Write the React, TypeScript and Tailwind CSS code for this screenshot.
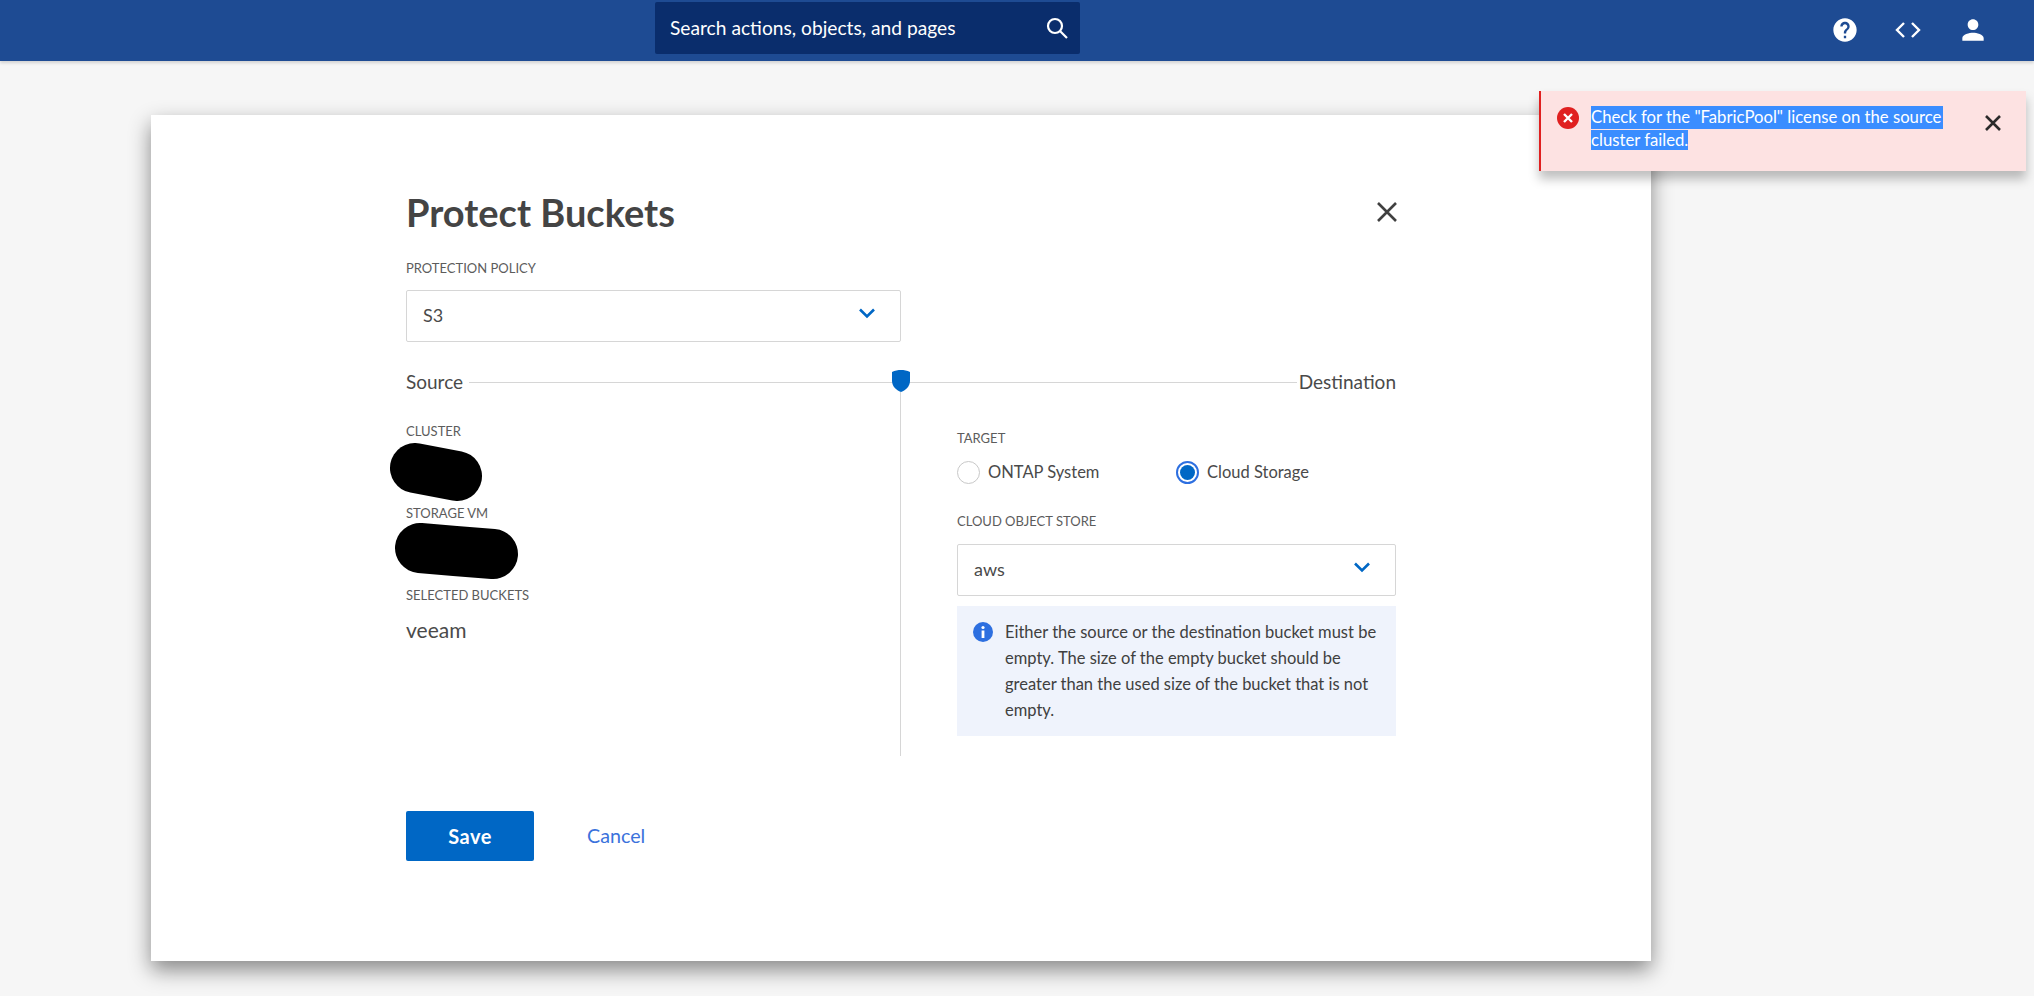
const font = "[font-family:Lato,'Noto_Sans',sans-serif]";

function Label({ children, className = '' }: { children: React.ReactNode; className?: string }) {
  return <div className={`h-[18px] text-[13px] leading-[18px] text-[#5c5c5c] ${className}`}>{children}</div>;
}

function Chevron() {
  return (
    <svg width="20" height="12" viewBox="0 0 20 12" fill="none" stroke="#0067c5" strokeWidth="2.6">
      <path d="M3 2.5l7 7 7-7" />
    </svg>
  );
}

function Select({ value, className = '' }: { value: string; className?: string }) {
  return (
    <div className={`flex h-[52px] items-center justify-between rounded-[2px] border border-[#d6d6d6] bg-white pl-4 pr-[23px] text-[18px] text-[#4a4a4a] ${className}`}>
      <span className="-mt-[2px]">{value}</span>
      <span className="-mt-[6px]"><Chevron /></span>
    </div>
  );
}

function Radio({ checked, label }: { checked?: boolean; label: string }) {
  return (
    <div className="flex items-center gap-[8px] text-[16.5px] text-[#4a4a4a]">
      {checked ? (
        <span className="flex h-[23px] w-[23px] items-center justify-center rounded-full border-2 border-[#2d6fe0] bg-white">
          <span className="h-[15px] w-[15px] rounded-full bg-[#0067c5]" />
        </span>
      ) : (
        <span className="h-[23px] w-[23px] rounded-full border border-[#c8c8c8] bg-white" />
      )}
      <span>{label}</span>
    </div>
  );
}

export default function App() {
  return (
    <div className={`relative h-[996px] overflow-hidden bg-[#f6f6f6] ${font}`}>
      <header className="relative flex h-[61px] items-start bg-[#1e4b93] shadow-[0_2px_3px_rgba(0,0,0,0.15)]">
        <div className="ml-[655px] mt-[2px] flex h-[52px] w-[425px] items-center justify-between rounded-[2px] bg-[#0a2d6c] pl-[15px] pr-[10px] text-[19.2px] text-white">
          <span>Search actions, objects, and pages</span>
          <svg width="26" height="26" viewBox="0 0 26 26" fill="none" stroke="white" strokeWidth="2.2">
            <circle cx="11" cy="11" r="7" />
            <path d="M16 16l7 7" />
          </svg>
        </div>
        <div className="ml-auto mr-[45px] mt-[14px] flex items-center gap-[35px]">
          <svg width="28" height="28" viewBox="0 0 24 24" fill="white">
            <path d="M12 2C6.48 2 2 6.48 2 12s4.48 10 10 10 10-4.48 10-10S17.52 2 12 2zm1 17h-2v-2h2v2zm2.07-7.75l-.9.92C13.45 12.9 13 13.5 13 15h-2v-.5c0-1.1.45-2.1 1.17-2.83l1.24-1.26c.37-.36.59-.86.59-1.41 0-1.1-.9-2-2-2s-2 .9-2 2H8c0-2.21 1.79-4 4-4s4 1.79 4 4c0 .88-.36 1.68-.93 2.25z" />
          </svg>
          <svg width="28" height="28" viewBox="0 0 28 28" fill="none" stroke="white" strokeWidth="2.4">
            <path d="M10 7l-7 7 7 7M18 7l7 7-7 7" />
          </svg>
          <svg width="32" height="32" viewBox="0 0 24 24" fill="white">
            <path d="M12 12c2.21 0 4-1.79 4-4s-1.79-4-4-4-4 1.79-4 4 1.79 4 4 4zm0 2c-2.67 0-8 1.34-8 4v2h16v-2c0-2.66-5.33-4-8-4z" />
          </svg>
        </div>
      </header>

      <main className="ml-[151px] mt-[54px] flex h-[846px] w-[1500px] flex-col bg-white pl-[255px] pr-[255px] pt-[70px] shadow-[0_9px_20px_rgba(0,0,0,0.45)]">
        <div className="flex h-[54px] items-center justify-between">
          <h1 className="text-[38px] font-bold text-[#444444]">Protect Buckets</h1>
          <svg className="mr-[-3px]" width="24" height="24" viewBox="0 0 24 24" fill="none" stroke="#404040" strokeWidth="2.6">
            <path d="M3 3l18 18M21 3L3 21" />
          </svg>
        </div>

        <Label className="mt-[20px]">PROTECTION POLICY</Label>
        <Select value="S3" className="mt-[13px] w-[495px]" />

        <div className="relative mt-[26px] flex h-[28px] items-center text-[19px] text-[#4a4a4a]">
          <span>Source</span>
          <span className="ml-[6px] h-px flex-1 bg-[#d6d6d6]" />
          <span className="ml-[2px]">Destination</span>
          <svg className="absolute left-[486px] top-[2px]" width="18" height="22" viewBox="0 0 18 22" fill="#0067c5">
            <path d="M9 0c3 0 6 .6 9 2v9c0 5-4 9-9 11-5-2-9-6-9-11V2c3-1.4 6-2 9-2z" />
          </svg>
        </div>

        <div className="flex">
          <div className="w-[494px] pt-[26px]">
            <Label>CLUSTER</Label>
            <svg className="ml-[-16px] mt-[3px] block" width="92" height="58" viewBox="0 0 92 58">
              <path d="M25 25L67 33" stroke="black" strokeWidth="50" strokeLinecap="round" fill="none" />
            </svg>
            <Label className="mt-[3px]">STORAGE VM</Label>
            <svg className="ml-[-11px] mt-[1px] block" width="124" height="56" viewBox="0 0 124 56">
              <path d="M25 25L60 28L98 31" stroke="black" strokeWidth="50" strokeLinecap="round" fill="none" />
            </svg>
            <Label className="mt-[7px]">SELECTED BUCKETS</Label>
            <div className="mt-[13px] text-[21px] leading-[26px] text-[#4a4a4a]">veeam</div>
          </div>
          <div className="mt-[-4px] h-[364px] flex-1 border-l border-[#d6d6d6] pl-[56px] pt-[37px]">
            <Label>TARGET</Label>
            <div className="mt-[11px] flex h-[28px] items-center">
              <div className="w-[219px]"><Radio label="ONTAP System" /></div>
              <Radio checked label="Cloud Storage" />
            </div>
            <Label className="mt-[26px]">CLOUD OBJECT STORE</Label>
            <Select value="aws" className="mt-[14px]" />
            <div className="mt-[10px] flex gap-[12px] bg-[#eff3fc] py-[13px] pl-[16px] pr-[11px] text-[16.5px] leading-[26px] text-[#404040]">
              <svg className="mt-[3px] shrink-0" width="20" height="20" viewBox="0 0 20 20">
                <circle cx="10" cy="10" r="10" fill="#2d6fe0" />
                <circle cx="10" cy="5.5" r="1.6" fill="white" />
                <rect x="8.6" y="8.5" width="2.8" height="7.5" fill="white" />
              </svg>
              <p>Either the source or the destination bucket must be empty. The size of the empty bucket should be greater than the used size of the bucket that is not empty.</p>
            </div>
          </div>
        </div>

        <div className="mt-[55px] flex items-center">
          <button className="h-[50px] w-[128px] rounded-[2px] bg-[#0067c5] text-[20px] font-bold tracking-[0.5px] text-white">Save</button>
          <a className="ml-[53px] text-[19.7px] text-[#3b72dc]">Cancel</a>
        </div>
      </main>

      <div className="absolute left-[1539px] top-[91px] flex h-[80px] w-[487px] border-l-2 border-[#e02020] bg-[#fde2e2] pl-[16px] pt-[15px] shadow-[0_8px_10px_rgba(0,0,0,0.25)]">
        <svg className="mt-[1px] shrink-0" width="22" height="22" viewBox="0 0 22 22">
          <circle cx="11" cy="11" r="11" fill="#e02020" />
          <path d="M7 7l8 8M15 7l-8 8" stroke="white" strokeWidth="2.4" />
        </svg>
        <div className="ml-[12px] w-[352px] text-[16.7px] leading-[23px] text-white">
          <div className="bg-[#3a8dff]">Check for the "FabricPool" license on the source</div>
          <span className="bg-[#3a8dff]">cluster failed.</span>
        </div>
        <svg className="ml-[40px] mt-[7px] shrink-0" width="20" height="20" viewBox="0 0 20 20" fill="none" stroke="#2b2b2b" strokeWidth="2.6">
          <path d="M3 3l14 14M17 3L3 17" />
        </svg>
      </div>
    </div>
  );
}
